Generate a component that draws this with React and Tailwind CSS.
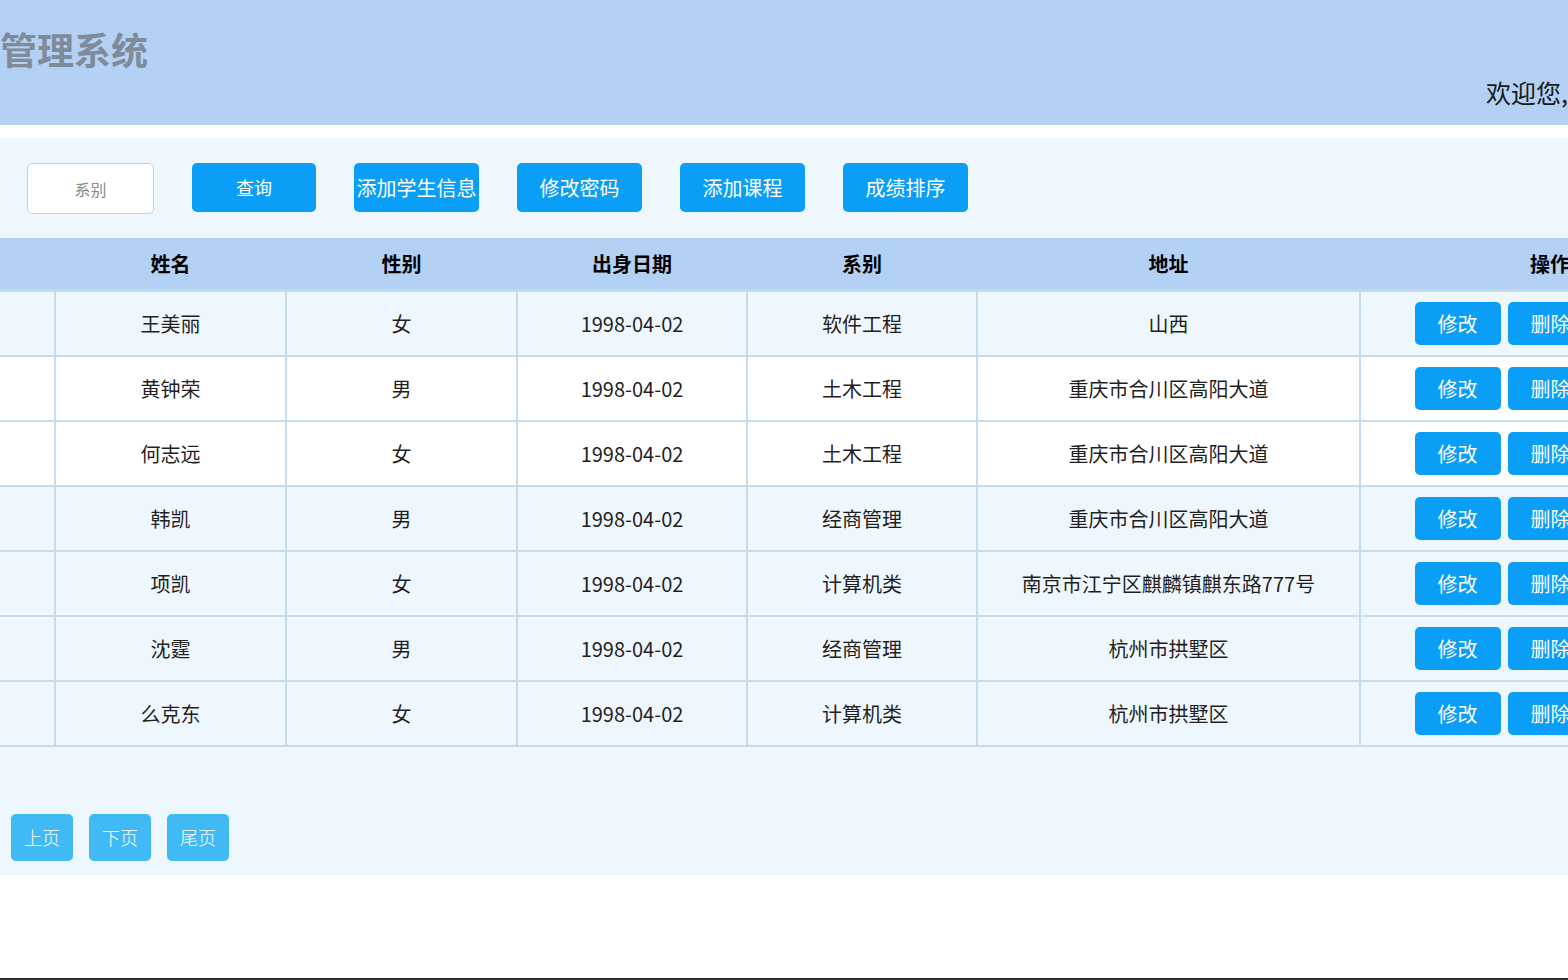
import React from "react";

const students = [
  { name: "王美丽", sex: "女", birth: "1998-04-02", dept: "软件工程", addr: "山西", light: true },
  { name: "黄钟荣", sex: "男", birth: "1998-04-02", dept: "土木工程", addr: "重庆市合川区高阳大道", light: false },
  { name: "何志远", sex: "女", birth: "1998-04-02", dept: "土木工程", addr: "重庆市合川区高阳大道", light: false },
  { name: "韩凯", sex: "男", birth: "1998-04-02", dept: "经商管理", addr: "重庆市合川区高阳大道", light: true },
  { name: "项凯", sex: "女", birth: "1998-04-02", dept: "计算机类", addr: "南京市江宁区麒麟镇麒东路777号", light: true },
  { name: "沈霆", sex: "男", birth: "1998-04-02", dept: "经商管理", addr: "杭州市拱墅区", light: true },
  { name: "么克东", sex: "女", birth: "1998-04-02", dept: "计算机类", addr: "杭州市拱墅区", light: true },
];

const toolButtons = ["添加学生信息", "修改密码", "添加课程", "成绩排序"];

const cell = "shrink-0 flex items-center justify-center border-l-2 border-[#c5dbee]";

const App = () => {
  return (
    <div
      className="w-[1568px] h-[980px] overflow-hidden bg-white text-[#1f1f1f] flex flex-col"
      style={{ fontFamily: '"Noto Sans CJK SC", "Noto Sans", sans-serif' }}
    >
      {/* header */}
      <div className="h-[125px] shrink-0 bg-[#b3d1f4] flex flex-col">
        <div className="pt-[31px] text-[37px] leading-[37px] font-bold text-[#7f8b99] whitespace-nowrap">
          管理系统
        </div>
        <div className="mt-[12px] flex justify-end text-[25px] leading-[25px] text-[#1a1a1a] whitespace-nowrap">
          欢迎您,
        </div>
      </div>

      <div className="h-[13px] shrink-0 bg-white" />

      <div className="bg-[#eff7fe] pb-[14px] shrink-0">
        {/* toolbar */}
        <div className="h-[100px] flex items-start pt-[25px] pl-[27px] gap-[38px]">
          <div className="w-[127px] h-[51px] bg-white border border-[#c9cdd2] rounded-[5px] flex items-center justify-center text-[16px] text-[#8a8a8a]">
            系别
          </div>
          <button className="w-[124px] h-[49px] bg-[#0b9ef6] rounded-[5px] text-white text-[18px]">
            查询
          </button>
          {toolButtons.map((b) => (
            <button
              key={b}
              className="w-[125px] h-[49px] bg-[#0b9ef6] rounded-[5px] text-white text-[20px] whitespace-nowrap overflow-hidden"
            >
              {b}
            </button>
          ))}
        </div>

        {/* table */}
        <div className="w-[1740px]">
          <div className="h-[54px] bg-[#b3d1f4] flex items-center text-[20px] font-bold text-black border-b-2 border-[#c5dbee]">
            <div className="w-[55px] shrink-0" />
            <div className="w-[231px] shrink-0 text-center">姓名</div>
            <div className="w-[231px] shrink-0 text-center">性别</div>
            <div className="w-[230px] shrink-0 text-center">出身日期</div>
            <div className="w-[230px] shrink-0 text-center">系别</div>
            <div className="w-[383px] shrink-0 text-center">地址</div>
            <div className="w-[380px] shrink-0 text-center">操作</div>
          </div>

          {students.map((s) => (
            <div
              key={s.name}
              className={`h-[65px] flex border-b-2 border-[#c5dbee] text-[20px] ${
                s.light ? "bg-[#eff7fe]" : "bg-white"
              }`}
            >
              <div className="w-[54px] shrink-0" />
              <div className={`${cell} w-[231px]`}>{s.name}</div>
              <div className={`${cell} w-[231px]`}>{s.sex}</div>
              <div className={`${cell} w-[230px]`}>{s.birth}</div>
              <div className={`${cell} w-[230px]`}>{s.dept}</div>
              <div className={`${cell} w-[383px] whitespace-nowrap`}>{s.addr}</div>
              <div className={`${cell} w-[381px] gap-[7px]`}>
                <button className="w-[86px] h-[43px] bg-[#0b9ef6] rounded-[5px] text-white text-[20px]">
                  修改
                </button>
                <button className="w-[86px] h-[43px] bg-[#0b9ef6] rounded-[5px] text-white text-[20px]">
                  删除
                </button>
                <button className="w-[86px] h-[43px] bg-[#0b9ef6] rounded-[5px] text-white text-[20px]">
                  成绩
                </button>
              </div>
            </div>
          ))}
        </div>

        {/* pagination */}
        <div className="mt-[67px] pl-[11px] flex gap-[16px]">
          {["上页", "下页", "尾页"].map((p) => (
            <button
              key={p}
              className="w-[62px] h-[47px] bg-[#3fbaf5] rounded-[5px] text-white text-[18px] font-light"
            >
              {p}
            </button>
          ))}
        </div>
      </div>

      <div className="flex-1" />
      <div className="h-[2px] shrink-0 bg-[#2b2b2b]" />
    </div>
  );
};

export default App;
